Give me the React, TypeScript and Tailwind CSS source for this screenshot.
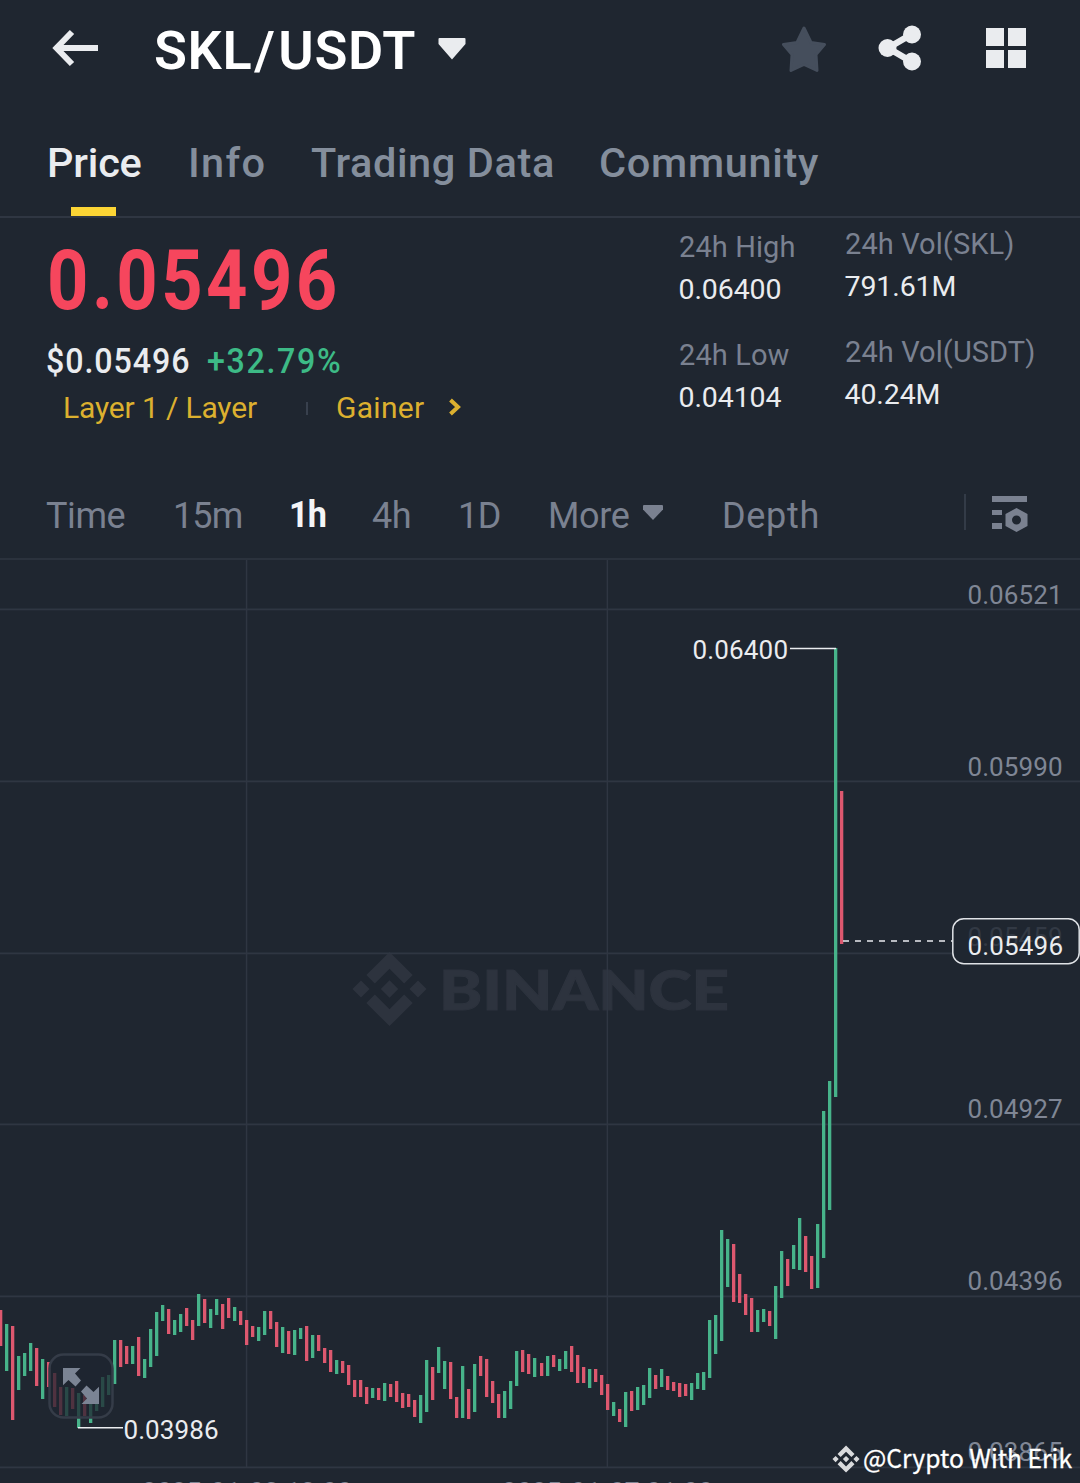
const UP = "#47b38a";
const DOWN = "#dd586f";

/* One entry per candle: direction, top, bottom */
const CANDLES = `
r1310-1346 g1324-1371 r1326-1420 g1356-1390 g1353-1376 g1343-1371 r1348-1386 g1359-1399 r1362-1387 r1373-1407
r1387-1415 g1387-1416 r1388-1409 g1393-1428 r1395-1416 g1400-1423 g1400-1411 g1377-1407 g1375-1395 g1340-1384
r1340-1367 r1346-1364 g1346-1364 r1337-1376 g1359-1378 g1329-1367 g1312-1356 g1305-1321 r1309-1334 g1320-1335
g1314-1332 r1308-1326 r1320-1340 g1294-1326 r1299-1323 g1309-1328 g1299-1315 r1304-1329 r1298-1318 g1307-1321
r1311-1325 r1320-1345 r1326-1337 g1327-1341 g1311-1335 r1311-1329 r1322-1347 g1327-1353 r1331-1354 g1330-1355
g1328-1339 r1326-1361 g1335-1358 r1335-1351 r1348-1363 r1350-1372 g1360-1374 r1361-1373 r1365-1385 r1380-1397
r1380-1397 r1387-1404 g1388-1398 r1388-1400 g1383-1401 r1384-1397 r1381-1402 r1393-1408 r1394-1407 r1400-1417
g1395-1423 g1360-1412 r1367-1400 g1347-1373 g1361-1389 r1362-1399 r1397-1418 g1366-1418 r1389-1419 g1364-1412
r1356-1376 r1359-1397 r1381-1403 r1394-1418 g1391-1418 g1381-1409 g1351-1386 r1350-1372 r1354-1374 g1358-1377
r1363-1376 g1356-1376 r1355-1367 g1359-1371 g1351-1369 r1346-1372 r1355-1383 r1367-1383 g1369-1388 r1369-1382
r1375-1395 r1384-1410 g1402-1416 r1409-1422 g1392-1427 r1391-1411 g1387-1410 g1385-1405 g1368-1398 r1375-1389
g1369-1387 r1376-1390 r1382-1391 r1383-1397 r1384-1396 g1383-1400 g1373-1389 g1372-1390 g1320-1378 g1315-1354
g1230-1341 g1239-1287 r1244-1302 r1274-1303 r1294-1315 r1298-1332 g1310-1332 g1309-1322 r1311-1326 g1286-1339
g1251-1298 r1259-1286 g1245-1269 g1218-1270 r1236-1272 r1256-1289 g1224-1288 g1111-1258 g1081-1210 g648-1097
r791-944`
  .trim()
  .split(/\s+/)
  .map((entry, i) => {
    const [top, bottom] = entry.slice(1).split("-").map(Number);
    return { x: 6 * i - (i < 90 ? 1 : 0), top, bottom, up: entry[0] === "g" };
  });

const GRID_Y = [609, 781, 953, 1124, 1296, 1467];
const SCALE = [
  { y: 604, label: "0.06521" },
  { y: 776, label: "0.05990" },
  { y: 1118, label: "0.04927" },
  { y: 1290, label: "0.04396" },
  { y: 1461, label: "0.03865" },
];

function BinanceMark() {
  return (
    <path d="M38.2 53.8 63.3 28.8l25 25 14.6-14.5L63.3 0 23.7 39.3l14.5 14.5zM0 63.3l14.5-14.5L29 63.3 14.5 77.8 0 63.3zm38.2 9.5 25.1 25 25-25 14.6 14.5-39.6 39.3-39.6-39.3 14.5-14.5zM97.5 63.3 112 48.8l14.5 14.5L112 77.8 97.5 63.3zm-19.4 0L63.3 48.5 48.5 63.3l14.8 14.8 14.8-14.8z" />
  );
}

function Header() {
  return (
    <header className="flex h-[96px] items-center text-[#eaecef]">
      <svg className="ml-[50px] h-[40px] w-[50px] shrink-0" viewBox="0 0 50 40" fill="none" stroke="currentColor" strokeWidth="6">
        <path d="M48 20H8M22 4 6.500 20 22 36" />
      </svg>
      <h1 className="ml-[54px] w-[284px] shrink-0 whitespace-nowrap pt-[5px] text-[54px] font-semibold leading-none tracking-[0.600px] text-white">
        SKL<span className="ml-[2px] mr-[3px]">/</span>USDT
      </h1>
      <svg className="h-[24px] w-[28px] shrink-0" viewBox="0 0 28 24" fill="currentColor">
        <path d="M1.500 2h25a1 1 0 0 1 1 1v5L14 23.500.5 8V3a1 1 0 0 1 1-1z" />
      </svg>
      <svg className="ml-[315px] h-[48px] w-[46px] shrink-0 text-[#454e5c]" viewBox="0 0 46 48" fill="currentColor" stroke="currentColor" strokeWidth="3" strokeLinejoin="round">
        <path d="m23 4 7 14.500L43.500 20.500 35 30.500 36 46.500 23 40.500 10 46.500 11 30.500 2.500 20.500 16 18.500z" />
      </svg>
      <svg className="ml-[51px] h-[48px] w-[44px] shrink-0" viewBox="0 0 44 48" fill="currentColor">
        <path d="M10 24 34 10M10 24l24 14" stroke="currentColor" strokeWidth="6.500" />
        <circle cx="9.500" cy="24" r="9" />
        <circle cx="34" cy="10.500" r="9" />
        <circle cx="34" cy="37.500" r="9" />
      </svg>
      <div className="ml-[64px] grid h-[40px] w-[40px] shrink-0 grid-cols-2 gap-[4px]">
        <i className="bg-current" />
        <i className="bg-current" />
        <i className="bg-current" />
        <i className="bg-current" />
      </div>
    </header>
  );
}

function Tabs() {
  return (
    <nav className="flex h-[122px] whitespace-nowrap border-b-2 border-[#2f3642] pl-[47px] text-[41.500px] font-medium leading-[48px] text-[#848e9c]">
      <div className="flex w-[141px] flex-col pt-[43px] text-[#eaecef]">
        <span className="tracking-[-0.2px]">Price</span>
        <span className="ml-[24px] mt-[20px] h-[9px] w-[45px] bg-[#fcd535]" />
      </div>
      <span className="w-[123px] pt-[43px] tracking-[1.300px]">Info</span>
      <span className="w-[288px] pt-[43px] tracking-[0.600px]">Trading Data</span>
      <span className="pt-[43px] tracking-[0.700px]">Community</span>
    </nav>
  );
}

function Stat({ label, value }: { label: string; value: string }) {
  return (
    <div className="h-[108px] whitespace-nowrap">
      <div className="text-[29px] leading-[34px] tracking-[0.100px] text-[#7a8190]">{label}</div>
      <div className="ml-[-0.500px] mt-[8px] pt-px text-[28.500px] leading-[34px] tracking-[-0.100px] text-[#eaecef]">{value}</div>
    </div>
  );
}

function Summary() {
  return (
    <section className="flex h-[252px]">
      <div className="w-[679px] pl-[47px]">
        <div className="mt-[20px] h-[86px] origin-left scale-x-[.86] text-[84px] font-bold leading-[86px] tracking-[4px] text-[#f6465d]">0.05496</div>
        <div className="mt-[17px] flex h-[42px] whitespace-nowrap text-[35px] font-medium leading-[42px]">
          <span className="ml-[-1px] w-[161px] origin-left scale-x-[.92] tracking-[1px] text-[#eaecef]">$0.05496</span>
          <span className="origin-left scale-x-[.92] tracking-[1.800px] text-[#3dba86]">+32.79%</span>
        </div>
        <div className="mt-[7px] flex h-[36px] items-center whitespace-nowrap pl-[16px] text-[30px] leading-[36px] text-[#dcb02f]">
          <span className="w-[243px] tracking-[-0.150px]">Layer 1 / Layer</span>
          <span className="h-[13px] w-[2px] bg-[#38404d]" />
          <span className="ml-[28px] w-[112px] tracking-[0.300px]">Gainer</span>
          <svg className="mb-[2px] h-[18px] w-[14px]" viewBox="0 0 14 18" fill="none" stroke="currentColor" strokeWidth="4">
            <path d="m2.500 2 7.500 7-7.500 7" />
          </svg>
        </div>
      </div>
      <div className="w-[166px] pt-[12px]">
        <Stat label="24h High" value="0.06400" />
        <Stat label="24h Low" value="0.04104" />
      </div>
      <div className="pt-[9px]">
        <Stat label="24h Vol(SKL)" value="791.61M" />
        <Stat label="24h Vol(USDT)" value="40.24M" />
      </div>
    </section>
  );
}

function Intervals() {
  return (
    <nav className="flex h-[90px] items-center whitespace-nowrap border-b-2 border-[#2b323d] pl-[46px] text-[36px] leading-[44px] tracking-[-0.400px] text-[#7a8190]">
      <span className="w-[127px] pt-[4px]">Time</span>
      <span className="w-[116px] pt-[4px] tracking-[-0.900px]">15m</span>
      <span className="w-[83px] origin-left scale-x-95 pt-[2px] font-bold tracking-[-1px] text-[#f4f5f7]">1h</span>
      <span className="w-[86px] pt-[4px]">4h</span>
      <span className="w-[90px] pt-[4px]">1D</span>
      <span className="w-[95px] pt-[4px]">More</span>
      <svg className="mb-[4px] h-[15px] w-[20px]" viewBox="0 0 20 15" fill="currentColor">
        <path d="M1 0h18a1 1 0 0 1 1 1v3.500L10 15 0 4.500V1a1 1 0 0 1 1-1z" />
      </svg>
      <span className="ml-[59px] w-[242px] pt-[4px] tracking-[0.700px]">Depth</span>
      <span className="mb-[4px] h-[36px] w-[2px] bg-[#333b47]" />
      <svg className="mb-px ml-[26px] h-[36px] w-[36px]" viewBox="0 0 36 36" fill="currentColor">
        <path d="M0 0h35v6H0zM0 14h10v5H0zM0 27h10v6H0z" />
        <path fillRule="evenodd" d="m24.500 12 11 6v12l-11 6-11-6V18zm0 7.500a4.500 4.500 0 1 0 0 9 4.500 4.500 0 0 0 0-9z" />
      </svg>
    </nav>
  );
}

function Chart() {
  return (
    <svg className="block h-[923px] w-[1080px]" viewBox="0 560 1080 923" fontSize="26">
      <g fill="#2d333e">
        <g transform="translate(352.500 952) scale(.585)">
          <BinanceMark />
        </g>
        <text x="439" y="1009.500" fontSize="56" fontWeight="900" stroke="#2d333e" strokeWidth="1" textLength="290" lengthAdjust="spacingAndGlyphs" className="font-['Lato']">BINANCE</text>
      </g>
      <g fill="#2f3642">
        {GRID_Y.map((y) => (
          <rect key={y} x="0" y={y - 0.5} width="1080" height="1.800" />
        ))}
        <rect x="245.800" y="560" width="1.500" height="907" />
        <rect x="606.600" y="560" width="1.500" height="907" />
      </g>
      <g fill="#7f8695">
        {SCALE.map((s) => (
          <text key={s.label} x="967.500" y={s.y} textLength="95">{s.label}</text>
        ))}
        <text x="142" y="1500.500" fontWeight="500" textLength="210">2025-01-03 13:00</text>
        <text x="502" y="1500.500" fontWeight="500" textLength="211">2025-01-07 01:00</text>
      </g>
      {CANDLES.map((c) => (
        <rect key={c.x} x={c.x} y={c.top} width="3.300" height={c.bottom - c.top} fill={c.up ? UP : DOWN} />
      ))}
      <g stroke="#eaecef" strokeWidth="1.500" fill="none">
        <path d="M790 648.500h46M78 1427.800h45" />
        <path d="M843 941h110" strokeDasharray="6 6" />
      </g>
      <g fill="#eaecef">
        <text x="692.500" y="658.500" textLength="95.500">0.06400</text>
        <text x="123.500" y="1438.500" textLength="95">0.03986</text>
      </g>
      <rect x="952.800" y="918.800" width="126.400" height="45" rx="11" fill="#1f2630" stroke="#dfe2e6" strokeWidth="1.500" />
      <text x="967.500" y="946" textLength="95" fill="#323944">0.05459</text>
      <text x="967.500" y="954.500" textLength="95.500" fill="#eaecef">0.05496</text>
      <rect x="49.500" y="1354.500" width="63" height="63" rx="14" fill="#1f2630" fillOpacity=".75" stroke="#353c48" strokeWidth="2.500" />
      <path fill="#7b8494" d="M63 1368h17.500l-5.500 5.500 6 7-5.500 6-7-6.500-5.500 5.300zM99 1404H81.500l5.500-5.500-6-7 5.500-6 7 6.500 5.500-5.300z" />
      <g fill="#d9dadc" transform="translate(832.500 1445.500) scale(.214)">
        <BinanceMark />
      </g>
      <text x="863" y="1468" fontSize="25" fontWeight="400" fill="#fff" stroke="#fff" strokeWidth=".3" textLength="209" lengthAdjust="spacingAndGlyphs" className="font-['Noto_Sans_CJK_SC',sans-serif]">@Crypto With Erik</text>
    </svg>
  );
}

export default function App() {
  return (
    <main className="h-[1483px] w-[1080px] overflow-hidden bg-[#1f2630] font-['Roboto',sans-serif]">
      <Header />
      <Tabs />
      <Summary />
      <Intervals />
      <Chart />
    </main>
  );
}
